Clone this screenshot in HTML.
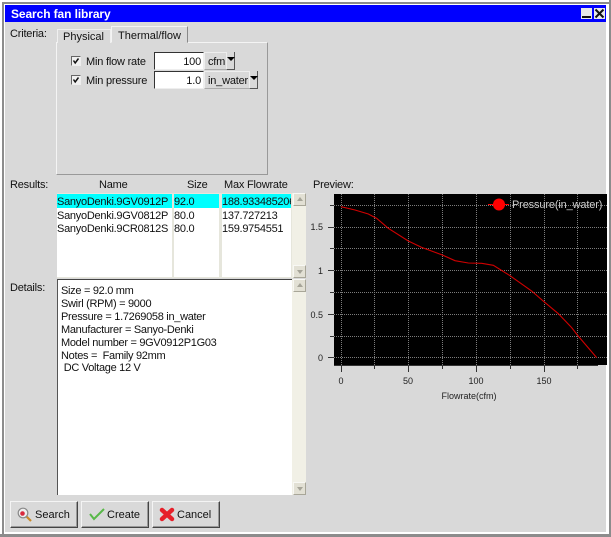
<!DOCTYPE html>
<html><head><meta charset="utf-8"><style>
html,body{margin:0;padding:0;width:611px;height:537px;overflow:hidden;background:#fff}
#w{position:absolute;left:0;top:0;width:611px;height:537px;filter:blur(.35px);font:11px/13px "Liberation Sans",sans-serif;color:#111;letter-spacing:-.2px}
.a{position:absolute;white-space:nowrap}
.box{position:absolute;box-sizing:border-box}
.lst{position:absolute;box-sizing:border-box;background:#fff;top:194px;height:83px;overflow:hidden;letter-spacing:-.27px}
.lst div{height:13.700px;line-height:16px;white-space:nowrap}
.sb{position:absolute;background:#f1f0e6;width:14px}
.ar{position:absolute;left:1px;width:13px;height:13px;box-sizing:border-box;background:#e2e0d4;border:1px solid;border-color:#f8f8f4 #a8a698 #a8a698 #f8f8f4}
.ar:after{content:"";position:absolute;left:3px;width:0;height:0;border-left:3px solid transparent;border-right:3px solid transparent}
.up:after{top:3px;border-bottom:4px solid #a6a498}
.dn:after{top:4px;border-top:4px solid #a6a498}
.inp{position:absolute;box-sizing:border-box;left:154px;width:50px;height:18px;background:#fff;border:1px solid;border-color:#333 #eee #eee #333;text-align:right;padding-right:2px;line-height:18px}
.sel{position:absolute;box-sizing:border-box;left:204px;height:18px;background:#d9d9d9;border:1px solid;border-color:#eee #aaa #aaa #eee;line-height:18px;padding-left:3px}
.sel i{position:absolute;right:-1px;top:-1px;width:9px;height:18px;background:#d9d9d9;border-left:1px solid #eee;border-right:1px solid #555;border-bottom:1px solid #555;box-sizing:border-box}
.sel i:after{content:"";position:absolute;left:0;top:5px;border-left:4px solid transparent;border-right:4px solid transparent;border-top:4px solid #000}
.cb{position:absolute;left:71px;width:10px;height:10px;box-sizing:border-box;background:#f0f0f0;border:1px solid;border-color:#666 #eee #eee #666}
.btn{position:absolute;top:501px;height:27px;width:68px;box-sizing:border-box;background:#d9d9d9;border:1px solid;border-color:#f4f4f4 #444 #444 #f4f4f4;box-shadow:inset -1px -1px 0 #999;line-height:27px}
.btn svg{position:absolute;left:5px;top:4px}
.btn span{position:absolute;white-space:nowrap;letter-spacing:0}
</style></head><body><div id="w">
<div class="box" style="left:2px;top:2px;width:607px;height:532px;background:#8c8c8c"></div>
<div class="box" style="left:4px;top:4px;width:605px;height:530px;background:#fff"></div>
<div class="box" style="left:5px;top:5px;width:601px;height:527px;background:#d9d9d9"></div>
<div class="box" style="left:609px;top:0;width:2px;height:537px;background:#8c8c8c"></div>
<div class="box" style="left:0;top:534px;width:611px;height:3px;background:#8c8c8c"></div>
<div class="box" style="left:5px;top:5px;width:601px;height:17px;background:#0000ff"></div>
<div class="a" style="left:11px;top:6px;color:#fff;font-weight:bold;font-size:12px;line-height:16px;letter-spacing:-.1px">Search fan library</div>
<div class="box" style="left:581px;top:8px;width:11px;height:11px;background:#e8e8e8"><div class="box" style="left:1px;top:8px;width:9px;height:2px;background:#111"></div></div>
<div class="box" style="left:594px;top:8px;width:11px;height:11px;background:#e8e8e8"></div>
<svg class="a" style="left:594px;top:8px" width="11" height="11"><path d="M1.500 1.500L9.500 9.500M9.500 1.500L1.500 9.500" stroke="#111" stroke-width="2"/></svg>

<div class="a" style="left:10px;top:28px">Criteria:</div>
<div class="box" style="left:56px;top:42px;width:212px;height:133px;background:#d9d9d9;border:1px solid;border-color:#f4f4f4 #999 #999 #f4f4f4"></div>
<div class="box" style="left:57px;top:29px;width:54px;height:14px;background:#d9d9d9;border:1px solid #f0f0f0;border-bottom:0"></div>
<div class="a" style="left:63px;top:31px;letter-spacing:0">Physical</div>
<div class="box" style="left:111px;top:26px;width:77px;height:17px;background:#d9d9d9;border:1px solid;border-color:#f4f4f4 #888 #d9d9d9 #f4f4f4"></div>
<div class="a" style="left:118px;top:30px;letter-spacing:0">Thermal/flow</div>

<div class="cb" style="top:56px"></div>
<svg class="a" style="left:71px;top:56px" width="10" height="10"><path d="M2.500 4.500L4.200 7L7.500 2.500" fill="none" stroke="#111" stroke-width="1.500"/></svg>
<div class="a" style="left:86px;top:56px">Min flow rate</div>
<div class="inp" style="top:52px">100</div>
<div class="sel" style="top:52px;width:31px">cfm<i></i></div>
<div class="cb" style="top:75px"></div>
<svg class="a" style="left:71px;top:75px" width="10" height="10"><path d="M2.500 4.500L4.200 7L7.500 2.500" fill="none" stroke="#111" stroke-width="1.500"/></svg>
<div class="a" style="left:86px;top:75px">Min pressure</div>
<div class="inp" style="top:71px">1.0</div>
<div class="sel" style="top:71px;width:54px">in_water<i></i></div>

<div class="a" style="left:10px;top:179px">Results:</div>
<div class="a" style="left:99px;top:179px">Name</div>
<div class="a" style="left:187px;top:179px">Size</div>
<div class="a" style="left:224px;top:179px">Max Flowrate</div>
<div class="a" style="left:313px;top:179px">Preview:</div>

<div class="box" style="left:57px;top:193px;width:235px;height:85px;background:#e6e6dc"></div>
<div class="lst" style="left:57px;width:115px"><div style="background:#00ffff">SanyoDenki.9GV0912P</div><div>SanyoDenki.9GV0812P</div><div>SanyoDenki.9CR0812S</div></div>
<div class="lst" style="left:174px;width:45px"><div style="background:#00ffff">92.0</div><div>80.0</div><div>80.0</div></div>
<div class="lst" style="left:222px;width:69px"><div style="background:#00ffff">188.9334852066</div><div>137.727213</div><div>159.9754551</div></div>
<div class="sb" style="left:292px;top:193px;height:85px"><div class="ar up" style="top:0"></div><div class="ar dn" style="top:72px"></div></div>

<div class="a" style="left:10px;top:282px">Details:</div>
<div class="box" style="left:57px;top:279px;width:235px;height:216px;background:#fff;border-top:1px solid #444;border-left:1px solid #555"></div>
<div class="a" style="left:61px;top:285px;line-height:12.900px;letter-spacing:-.3px">Size = 92.0 mm<br>Swirl (RPM) = 9000<br>Pressure = 1.7269058 in_water<br>Manufacturer = Sanyo-Denki<br>Model number = 9GV0912P1G03<br>Notes =&nbsp; Family 92mm<br>&nbsp;DC Voltage 12 V</div>
<div class="sb" style="left:292px;top:279px;height:216px"><div class="ar up" style="top:0"></div><div class="ar dn" style="top:203px"></div></div>

<svg class="a" style="left:0;top:0;letter-spacing:0" width="611" height="420">
<rect x="334" y="194" width="273" height="171" fill="#000"/>
<g stroke="#7c7c7c" stroke-width="1" stroke-dasharray="1 1">
<path d="M341.500 194V365M374.500 194V365M408.500 194V365M442.500 194V365M476.500 194V365M510.500 194V365M544.500 194V365M577.500 194V365"/>
<path d="M334 205.500H607M334 227.500H607M334 248.500H607M334 270.500H607M334 292.500H607M334 314.500H607M334 336.500H607M334 357.500H607"/>
</g>
<g stroke="#333" stroke-width="1" fill="none">
<path d="M334 365.500H598"/>
<path d="M341.500 365V372M374.500 365V369M408.500 365V372M442.500 365V369M476.500 365V372M510.500 365V369M544.500 365V372M577.500 365V369"/>
<path d="M330 205.500H334M328 227.500H334M330 248.500H334M328 270.500H334M330 292.500H334M328 314.500H334M330 336.500H334M328 357.500H334"/>
</g>
<g transform="translate(305 175) scale(.33333)"><path d="M108 95L150 105L190 117L215 130L250 160L310 198L350 217L412 240L450 257L490 264L530 265L565 271L615 302L680 348L717 380L760 416L800 458L817 480L875 548" fill="none" stroke="#d00000" stroke-width="3.300"/></g>
<path d="M488 204.500H509" stroke="#f00" stroke-width="1"/><circle cx="499" cy="204.500" r="6" fill="#f00"/>
<text x="512" y="208" font-family="Liberation Sans" font-size="11" letter-spacing="-.15" fill="#ccc">Pressure(in_water)</text>
<g font-family="Liberation Sans" font-size="9" fill="#222">
<text x="323" y="230" text-anchor="end">1.5</text><text x="323" y="274" text-anchor="end">1</text><text x="323" y="318" text-anchor="end">0.5</text><text x="323" y="361" text-anchor="end">0</text>
<text x="341" y="384" text-anchor="middle">0</text><text x="408" y="384" text-anchor="middle">50</text><text x="476" y="384" text-anchor="middle">100</text><text x="544" y="384" text-anchor="middle">150</text>
<text x="469" y="399" text-anchor="middle">Flowrate(cfm)</text>
</g>
</svg>

<div class="btn" style="left:10px"><svg width="18" height="18"><path d="M10.500 10.500L15 15" stroke="#c98a2a" stroke-width="2.200"/><circle cx="7" cy="7" r="4.800" fill="#eee" stroke="#888" stroke-width="1.200"/><circle cx="6.500" cy="7.500" r="2.300" fill="#d8283c"/></svg><span style="left:24px;top:0">Search</span></div>
<div class="btn" style="left:81px"><svg width="18" height="18"><path d="M3 8L7 13L17 3" fill="none" stroke="#58b848" stroke-width="2"/></svg><span style="left:25px;top:0">Create</span></div>
<div class="btn" style="left:152px"><svg width="18" height="18"><path d="M4 4L14 13M14 4L4 13" stroke="#e6202a" stroke-width="4.500" stroke-linecap="round"/></svg><span style="left:24px;top:0">Cancel</span></div>
</div></body></html>
